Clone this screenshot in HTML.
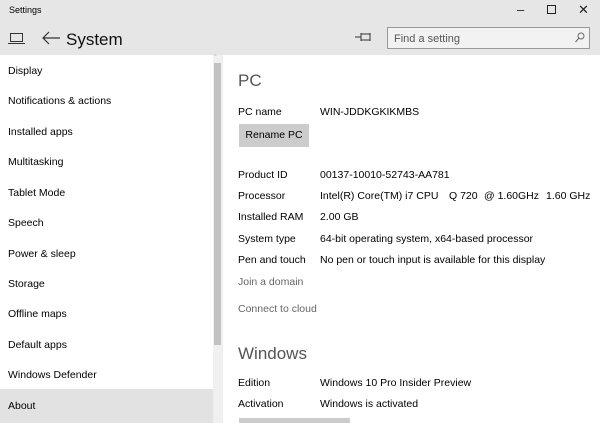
<!DOCTYPE html>
<html><head><style>
*{margin:0;padding:0;box-sizing:border-box}
body{width:600px;height:423px;overflow:hidden;background:#fff;font-family:"Liberation Sans",sans-serif;color:#000;position:relative;font-size:10.5px}
.a{position:absolute;white-space:nowrap}
.hdr{position:absolute;left:0;top:0;width:600px;height:55px;background:#e6e6e6}
.nav{left:8px}
.lbl{left:238px}
.val{left:320px}
</style></head><body>
<div class="hdr"></div>
<div class="a" style="left:9px;top:5px;font-size:9px">Settings</div>
<div class="a" style="left:517px;top:2px;font-size:13px;color:#222">&#8211;</div>
<div class="a" style="left:547px;top:5px;width:9px;height:9px;border:1px solid #222"></div>
<div class="a" style="left:578px;top:2px;font-size:13px;color:#222">&#10005;</div>
<svg class="a" style="left:8px;top:32px" width="18" height="13"><rect x="2.5" y="1.5" width="12" height="8" fill="none" stroke="#333"/><line x1="0" y1="11.5" x2="17" y2="11.5" stroke="#333"/></svg>
<svg class="a" style="left:41px;top:31px" width="20" height="14"><path d="M19 7H2M8 1L2 7l6 6" fill="none" stroke="#333" stroke-width="1.2"/></svg>
<div class="a" style="left:66px;top:30px;font-size:17px;color:#111">System</div>
<svg class="a" style="left:355px;top:32px" width="18" height="10"><path d="M0 5H6M6 1v8M6 2h9v6H6" fill="none" stroke="#333"/><line x1="15" y1="1" x2="15" y2="9" stroke="#333"/></svg>
<div class="a" style="left:387px;top:27px;width:203px;height:22px;border:1px solid #999;background:#f2f2f2"></div>
<div class="a" style="left:394px;top:33px;font-size:11px;color:#555">Find a setting</div>
<svg class="a" style="left:575px;top:32px" width="10" height="11"><circle cx="6" cy="4" r="3" fill="none" stroke="#666"/><line x1="4" y1="6" x2="0.5" y2="10" stroke="#666"/></svg>
<div class="a" style="left:213px;top:55px;width:9px;height:368px;background:#f0f0f0"></div>
<div class="a" style="left:214px;top:63px;width:7px;height:282px;background:#c2c2c2"></div>
<div class="a" style="left:214px;top:55px;font-size:7px;color:#999">&#710;</div>
<div class="a" style="left:222px;top:55px;width:1px;height:368px;background:#eee"></div>
<div class="a" style="left:0;top:389px;width:213px;height:34px;background:#e2e2e2"></div>
<div class="a nav" style="top:65px">Display</div>
<div class="a nav" style="top:95px">Notifications &amp; actions</div>
<div class="a nav" style="top:126px">Installed apps</div>
<div class="a nav" style="top:156px">Multitasking</div>
<div class="a nav" style="top:187px">Tablet Mode</div>
<div class="a nav" style="top:217px">Speech</div>
<div class="a nav" style="top:248px">Power &amp; sleep</div>
<div class="a nav" style="top:278px">Storage</div>
<div class="a nav" style="top:308px">Offline maps</div>
<div class="a nav" style="top:339px">Default apps</div>
<div class="a nav" style="top:369px">Windows Defender</div>
<div class="a nav" style="top:400px">About</div>
<div class="a" style="left:238px;top:71px;font-size:17px;color:#555">PC</div>
<div class="a lbl" style="top:106px">PC name</div><div class="a val" style="top:106px">WIN-JDDKGKIKMBS</div>
<div class="a" style="left:239px;top:124px;width:70px;height:23px;background:#ccc;text-align:center;line-height:23px">Rename PC</div>
<div class="a lbl" style="top:169px">Product ID</div><div class="a val" style="top:169px">00137-10010-52743-AA781</div>
<div class="a lbl" style="top:190px">Processor</div><div class="a val" style="top:190px">Intel(R) Core(TM) i7 CPU</div>
<div class="a" style="left:449px;top:190px">Q 720</div>
<div class="a" style="left:484px;top:190px">@ 1.60GHz</div>
<div class="a" style="left:546px;top:190px">1.60 GHz</div>
<div class="a lbl" style="top:211px">Installed RAM</div><div class="a val" style="top:211px">2.00 GB</div>
<div class="a lbl" style="top:233px">System type</div><div class="a val" style="top:233px">64-bit operating system, x64-based processor</div>
<div class="a lbl" style="top:254px">Pen and touch</div><div class="a val" style="top:254px">No pen or touch input is available for this display</div>
<div class="a lbl" style="top:276px;color:#666">Join a domain</div>
<div class="a lbl" style="top:303px;color:#666">Connect to cloud</div>
<div class="a" style="left:238px;top:344px;font-size:17px;color:#555">Windows</div>
<div class="a lbl" style="top:377px">Edition</div><div class="a val" style="top:377px">Windows 10 Pro Insider Preview</div>
<div class="a lbl" style="top:398px">Activation</div><div class="a val" style="top:398px">Windows is activated</div>
<div class="a" style="left:239px;top:418px;width:111px;height:5px;background:#ccc"></div>
</body></html>
